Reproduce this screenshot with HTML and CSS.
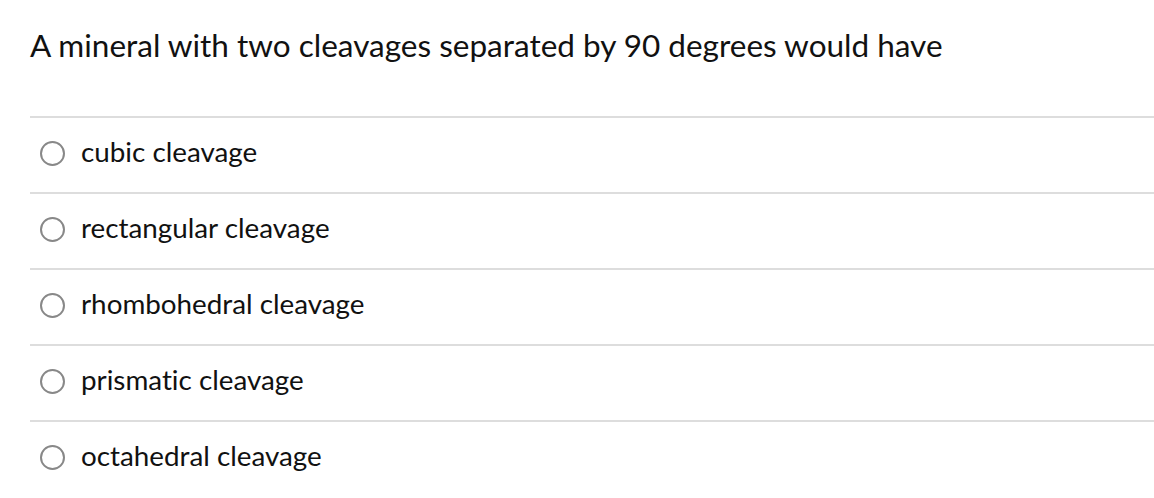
FILE: index.html
```html
<!DOCTYPE html>
<html>
<head>
<meta charset="utf-8">
<link rel="stylesheet" href="styles.css">
</head>
<body>
<div class="question">
  <h1 class="prompt">A mineral with two cleavages separated by 90 degrees would have</h1>
  <ul class="answers">
    <li class="answer"><span class="radio"></span><span class="label">cubic cleavage</span></li>
    <li class="answer"><span class="radio"></span><span class="label">rectangular cleavage</span></li>
    <li class="answer"><span class="radio"></span><span class="label">rhombohedral cleavage</span></li>
    <li class="answer"><span class="radio"></span><span class="label">prismatic cleavage</span></li>
    <li class="answer"><span class="radio"></span><span class="label">octahedral cleavage</span></li>
  </ul>
</div>
</body>
</html>
```
FILE: styles.css
```css
html, body {
  margin: 0;
  background: #fff;
}
body {
  font-family: Lato, "Open Sans", sans-serif;
  color: #111;
  font-variant-ligatures: none;
}
.question {
  padding-left: 30px;
}
.prompt {
  margin: 0;
  padding-top: 25px;
  height: 116px;
  box-sizing: border-box;
  font-size: 31.5px;
  font-weight: 400;
  line-height: 40px;
}
.answers {
  list-style: none;
  margin: 0;
  padding: 0;
}
.answer {
  display: flex;
  align-items: center;
  height: 76px;
  box-sizing: border-box;
  border-top: 2px solid #ddd;
  padding-left: 10px;
  padding-bottom: 7px;
}
.radio {
  width: 25px;
  height: 25px;
  border: 2px solid #888;
  border-radius: 50%;
  box-sizing: border-box;
  margin-right: 16px;
  flex: none;
  position: relative;
  top: 2px;
}
.label {
  font-size: 27.8px;
}
```
